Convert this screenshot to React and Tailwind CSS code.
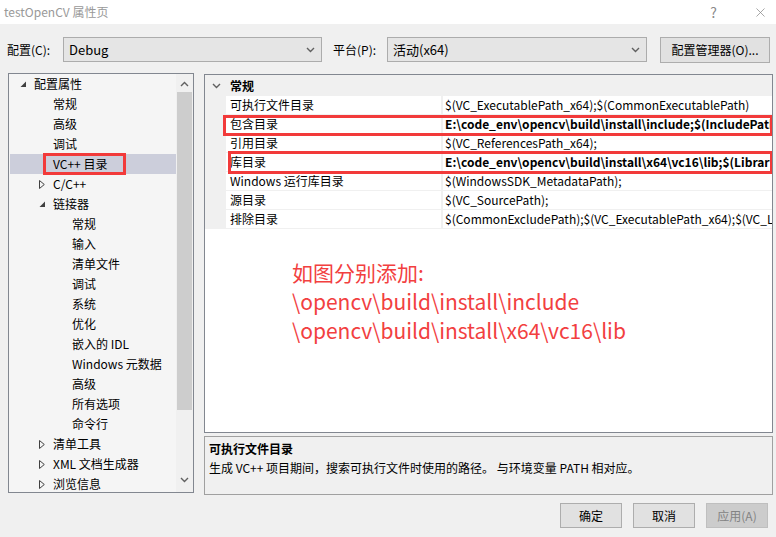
import { X } from 'lucide-react';

const FONT = { fontFamily: '"Microsoft YaHei UI", "Noto Sans CJK SC", "Noto Sans", sans-serif' };

const treeRows = [
  { label: '配置属性', level: 0, icon: 'open' },
  { label: '常规', level: 1 },
  { label: '高级', level: 1 },
  { label: '调试', level: 1 },
  { label: 'VC++ 目录', level: 1, selected: true },
  { label: 'C/C++', level: 1, icon: 'closed' },
  { label: '链接器', level: 1, icon: 'open' },
  { label: '常规', level: 2 },
  { label: '输入', level: 2 },
  { label: '清单文件', level: 2 },
  { label: '调试', level: 2 },
  { label: '系统', level: 2 },
  { label: '优化', level: 2 },
  { label: '嵌入的 IDL', level: 2 },
  { label: 'Windows 元数据', level: 2 },
  { label: '高级', level: 2 },
  { label: '所有选项', level: 2 },
  { label: '命令行', level: 2 },
  { label: '清单工具', level: 1, icon: 'closed' },
  { label: 'XML 文档生成器', level: 1, icon: 'closed' },
  { label: '浏览信息', level: 1, icon: 'closed' },
];

const props = [
  ['可执行文件目录', '$(VC_ExecutablePath_x64);$(CommonExecutablePath)'],
  ['包含目录', 'E:\\code_env\\opencv\\build\\install\\include;$(IncludePath)', true],
  ['引用目录', '$(VC_ReferencesPath_x64);'],
  ['库目录', 'E:\\code_env\\opencv\\build\\install\\x64\\vc16\\lib;$(LibraryPath_x64)', true],
  ['Windows 运行库目录', '$(WindowsSDK_MetadataPath);'],
  ['源目录', '$(VC_SourcePath);'],
  ['排除目录', '$(CommonExcludePath);$(VC_ExecutablePath_x64);$(VC_LibraryPath_x64)'],
];

const Chevron = ({ up = false, className = '' }) => (
  <svg width="9" height="6" viewBox="0 0 9 6" className={className}>
    <path
      d={up ? 'M1 5 L4.5 1.5 L8 5' : 'M1 1 L4.5 4.5 L8 1'}
      fill="none"
      stroke="#606060"
      strokeWidth="1.4"
    />
  </svg>
);

const TreeIcon = ({ type }) => {
  if (type === 'open') {
    return (
      <svg width="7" height="7" viewBox="0 0 7 7">
        <path d="M6 0.5 L6 6 L0.5 6 Z" fill="#404040" />
      </svg>
    );
  }
  return (
    <svg width="6" height="9" viewBox="0 0 6 9">
      <path d="M0.5 0.5 L5.3 4.5 L0.5 8.5 Z" fill="none" stroke="#404040" strokeWidth="1" />
    </svg>
  );
};

const Combo = ({ value, width }) => (
  <div className={`${width} h-[25px] shrink-0 bg-[#e5e5e5] border border-[#acacac] flex items-center justify-between pl-[5px] pr-[6px]`}>
    <span className="text-[13px] text-black">{value}</span>
    <Chevron />
  </div>
);

const Btn = ({ children, disabled }) => (
  <div
    className={`w-[62px] h-[25px] flex items-center justify-center text-[12px] border ${
      disabled ? 'bg-[#cccccc] border-[#bfbfbf] text-[#838383]' : 'bg-[#e1e1e1] border-[#adadad] text-black'
    }`}
  >
    {children}
  </div>
);

const indent = ['pl-[10px]', 'pl-[29px]', 'pl-[62px]'];

export default function App() {
  return (
    <div className="w-[776px] h-[537px] bg-[#f0f0f0] flex flex-col overflow-hidden" style={FONT}>
      {/* title bar */}
      <div className="h-[24px] bg-white flex items-center pl-[4px] pr-[8px] shrink-0">
        <span className="text-[12px] text-[#999999]">testOpenCV 属性页</span>
        <span className="ml-auto text-[14px] text-[#8a8a8a] mr-[36px]">?</span>
        <X className="w-[15px] h-[15px] text-[#8a8a8a]" strokeWidth={1.2} />
      </div>

      {/* config row */}
      <div className="h-[25px] mt-[13px] flex items-center pl-[7px] pr-[6px] shrink-0">
        <span className="text-[12px] text-black w-[56px] shrink-0">配置(C):</span>
        <Combo value="Debug" width="w-[259px]" />
        <span className="text-[12px] text-black ml-[11px] w-[54px] shrink-0">平台(P):</span>
        <Combo value="活动(x64)" width="w-[260px]" />
        <div className="ml-[13px] w-[110px] h-[26px] shrink-0 bg-[#e1e1e1] border border-[#adadad] flex items-center justify-center text-[12px] text-black">
          配置管理器(O)...
        </div>
      </div>

      {/* main area */}
      <div className="flex mt-[11px] pl-[8px] pr-[3px] shrink-0">
        {/* tree */}
        <div className="w-[186px] h-[420px] shrink-0 border border-[#828790] bg-[#f5f5f5] flex overflow-hidden">
          <div className="flex-1 flex flex-col pl-[1px]">
            {treeRows.map((r, i) => (
              <div
                key={i}
                className={`h-[20px] shrink-0 flex items-center relative text-[12px] text-black whitespace-nowrap ${
                  r.selected ? 'bg-[#cccedb]' : ''
                } ${indent[r.level]}`}
              >
                {r.level < 2 && (
                  <span className="w-[14px] flex items-center shrink-0">
                    {r.icon && <TreeIcon type={r.icon} />}
                  </span>
                )}
                <span>{r.label}</span>
                {r.selected && (
                  <div className="absolute left-[33px] top-[-1px] w-[83px] h-[22px] border-[3px] border-[#f23a3a]" />
                )}
              </div>
            ))}
          </div>
          <div className="w-[17px] bg-[#f0f0f0] flex flex-col items-center shrink-0">
            <div className="h-[18px] flex items-center justify-center pt-[2px]">
              <Chevron up />
            </div>
            <div className="w-[15px] h-[318px] bg-[#cdcdcd]" />
            <div className="flex-1" />
            <div className="h-[16px] flex items-center justify-center mb-[4px]">
              <Chevron />
            </div>
          </div>
        </div>

        {/* right column */}
        <div className="ml-[10px] flex-1 min-w-0 flex flex-col">
          <div className="h-[359px] mt-[1px] border border-[#828790] bg-white relative flex flex-col overflow-hidden">
            <div className="h-[21px] flex items-center bg-[#f0f0f0] shrink-0">
              <span className="w-[21px] flex justify-center pl-[2px]">
                <Chevron />
              </span>
              <span className="ml-[4px] text-[12px] font-bold text-black">常规</span>
            </div>
            {props.map(([name, value, bold], i) => (
              <div key={i} className="h-[19px] flex shrink-0 text-[12px] text-black">
                <div className="w-[21px] bg-[#f0f0f0] shrink-0" />
                <div className="w-[215px] shrink-0 flex items-center pl-[4px] border-b border-[#f0f0f0] whitespace-nowrap">
                  {name}
                </div>
                <div className="w-[2px] bg-[#f0f0f0] shrink-0" />
                <div
                  className={`flex-1 min-w-0 flex items-center pl-[2px] border-b border-[#f0f0f0] whitespace-nowrap overflow-hidden ${
                    bold ? 'font-bold' : ''
                  }`}
                >
                  {value}
                </div>
              </div>
            ))}

            <div className="mt-[29px] pl-[87px] text-[21px] leading-[29px] text-[#f2403f]">
              <div>如图分别添加:</div>
              <div>\opencv\build\install\include</div>
              <div>\opencv\build\install\x64\vc16\lib</div>
            </div>

            <div className="absolute left-[18px] top-[40px] w-[550px] h-[21px] border-[3px] border-[#f23a3a]" />
            <div className="absolute left-[23px] top-[76px] w-[545px] h-[23px] border-[3px] border-[#f23a3a]" />
          </div>

          <div className="h-[59px] mt-[3px] border border-[#a0a0a0] bg-[#f0f0f0] px-[4px] pt-[2px] text-[12px] text-black">
            <div className="font-bold h-[19px] flex items-center">可执行文件目录</div>
            <div className="h-[19px] flex items-center">生成 VC++ 项目期间，搜索可执行文件时使用的路径。 与环境变量 PATH 相对应。</div>
          </div>
        </div>
      </div>

      {/* buttons */}
      <div className="flex justify-end gap-[11px] pr-[8px] mt-[8px]">
        <Btn>确定</Btn>
        <Btn>取消</Btn>
        <Btn disabled>应用(A)</Btn>
      </div>
    </div>
  );
}
